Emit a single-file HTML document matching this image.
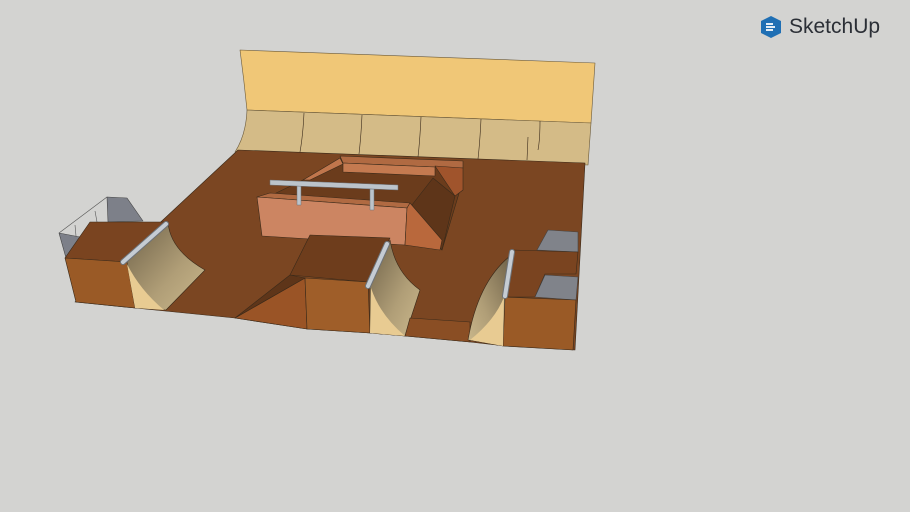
<!DOCTYPE html>
<html><head><meta charset="utf-8"><style>
html,body{margin:0;padding:0;width:910px;height:512px;overflow:hidden;background:#d3d3d1}
.logo{position:absolute;left:760px;top:15px;display:flex;align-items:center;font-family:"Liberation Sans",sans-serif;font-size:21px;color:#2b2f36}
</style></head><body>
<svg width="910" height="512" style="position:absolute;left:0;top:0" stroke="#3a2a1a" stroke-width="0.6" stroke-linejoin="round">
<defs>
<linearGradient id="qp" x1="0" y1="0" x2="1" y2="1"><stop offset="0" stop-color="#6f6249"/><stop offset="0.6" stop-color="#b09e77"/><stop offset="1" stop-color="#cbb88c"/></linearGradient>
<linearGradient id="qp2" x1="1" y1="0" x2="0" y2="1"><stop offset="0" stop-color="#6f6249"/><stop offset="0.6" stop-color="#b09e77"/><stop offset="1" stop-color="#cbb88c"/></linearGradient>
</defs>
<!-- wall -->
<path d="M240,50 L595,63 L591,123 L247,110 Q244,80 240,50Z" fill="#f0c777" stroke="#6b5a3a"/>
<path d="M247,110 L591,123 L588,165 L235,152 Q246,135 247,110Z" fill="#d4bb87" stroke="#6b5a3a"/>
<g stroke="#3a2a1a" fill="none"><path d="M304,113 Q303,135 300,152"/><path d="M362,115 Q361,137 359,154"/><path d="M421,117 Q420,139 418,157"/><path d="M481,119 Q480,141 478,159"/><path d="M540,121 Q540,140 538,150"/><line x1="528" y1="137" x2="527" y2="160"/></g>
<!-- floor -->
<path d="M238,150 L585,163 L575,350 L505,346 L470,342 L405,336 L370,333 L307,329 L235,318 L135,308 L75,302 L165,218Z" fill="#7b4622"/>
<!-- funbox -->
<path d="M270,196 L303,180 L340,163 L435,164 L460,190 L442,250 L407,208Z" fill="#6b3c1c"/>
<path d="M303,180 L340,158 L343,164 L310,180Z" fill="#c0764c"/>
<path d="M340,156 L463,161 L463,168 L435,167 L343,163Z" fill="#b06a42"/>
<path d="M343,163 L435,167 L435,176 L343,172Z" fill="#c47a50"/>
<path d="M435,166 L463,168 L463,190 L455,196Z" fill="#a0542c"/>
<path d="M433,178 L455,196 L442,250 L408,210Z" fill="#5e3519"/>
<path d="M257,197 L270,193 L410,203 L407,208Z" fill="#b06a42"/>
<path d="M257,197 L407,208 L405,245 L262,236Z" fill="#cc8562"/>
<path d="M407,208 L410,203 L442,240 L440,250 L405,245Z" fill="#b9683c"/>
<!-- rail -->
<g stroke="#6d7278" stroke-width="0.5" fill="#bcc4cb"><rect x="297" y="185" width="4" height="20"/><rect x="370" y="189" width="4" height="21"/>
<path d="M270,180 L398,185 L398,190 L270,185Z"/></g>
<!-- left group -->
<path d="M59,233 L80,237 L100,258 L66,258Z" fill="#7d8089" stroke="#444"/>
<path d="M107,197 L127,198 L143,221 L108,222Z" fill="#7d8089" stroke="#444"/>
<path d="M59,233 L107,197 M75,225 L76,236 M95,211 L97,222" fill="none" stroke="#555"/>
<path d="M90,222 L168,222 L127,262 L65,258 Z" fill="#7a4420"/>
<path d="M65,258 L127,262 L135,308 L76,302Z" fill="#9a5a26"/>
<path d="M127,262 L168,222 Q170,250 205,270 L166,310 L135,308Z" fill="url(#qp)"/>
<path d="M127,264 L135,308 L164,310 Q140,290 127,264Z" fill="#e8cb92" stroke="none"/>
<path d="M123,262 L166,224" stroke="#6d7278" stroke-width="6" stroke-linecap="round"/>
<path d="M123,262 L166,224" stroke="#c5ccd3" stroke-width="4" stroke-linecap="round"/>
<!-- center box -->
<path d="M235,318 L305,278 L307,329Z" fill="#9a5426"/>
<path d="M235,318 L290,275 L305,278Z" fill="#5e3519"/>
<path d="M310,235 L390,238 L368,282 L290,275Z" fill="#6e3d1c"/>
<path d="M305,278 L368,282 L370,333 L307,329Z" fill="#9f5e29"/>
<path d="M370,285 L390,240 Q395,272 420,290 L405,336 L370,333Z" fill="url(#qp)"/>
<path d="M371,288 L370,333 L405,336 Q380,315 371,288Z" fill="#e8cb92" stroke="none"/>
<path d="M368,286 L387,244" stroke="#6d7278" stroke-width="6" stroke-linecap="round"/>
<path d="M368,286 L387,244" stroke="#c5ccd3" stroke-width="4" stroke-linecap="round"/>
<path d="M405,336 L410,318 L470,322 L470,342Z" fill="#8a4e24"/>
<!-- right group -->
<path d="M537,250 L548,230 L578,232 L578,252Z" fill="#80838a" stroke="#444"/>
<path d="M512,250 L578,252 L576,274 L545,274 L535,297 L505,297Z" fill="#7a4420"/>
<path d="M535,297 L545,275 L578,277 L576,300Z" fill="#80838a" stroke="#444"/>
<path d="M504,297 L576,300 L573,350 L503,346Z" fill="#9a5a26"/>
<path d="M505,297 L510,256 Q478,282 468,340 L503,346Z" fill="url(#qp2)"/>
<path d="M504,297 L503,346 L470,340 Q495,320 504,297Z" fill="#e8cb92" stroke="none"/>
<path d="M505,296 L512,252" stroke="#6d7278" stroke-width="6" stroke-linecap="round"/>
<path d="M505,296 L512,252" stroke="#c5ccd3" stroke-width="4" stroke-linecap="round"/>
</svg>
<div class="logo"><svg width="22" height="24" viewBox="0 0 22 24"><path d="M11,1 L21,6 L21,18 L11,23 L1,18 L1,6Z" fill="#1f6fb4"/><path d="M6,9 L13,9 M6,12 L15,12 M6,15 L13,15" stroke="#fff" stroke-width="1.7" fill="none"/></svg><span style="margin-left:7px">SketchUp</span></div>
</body></html>
